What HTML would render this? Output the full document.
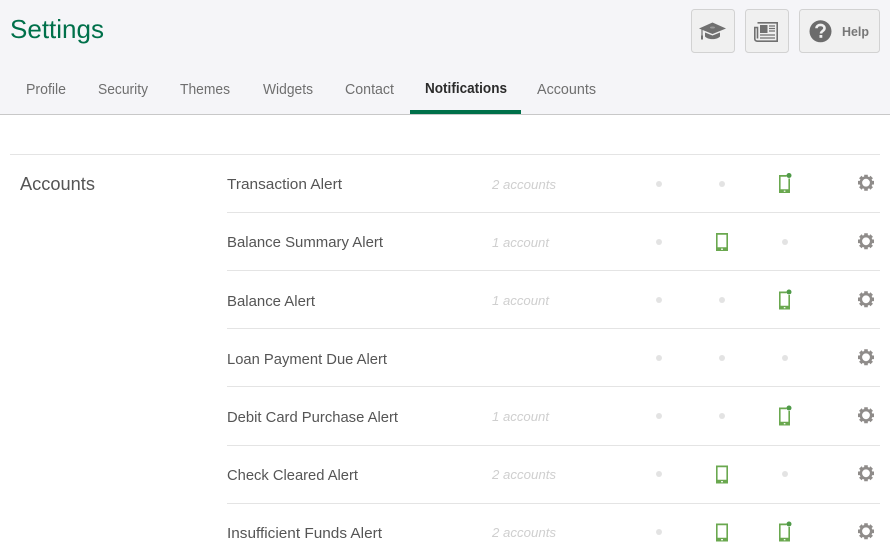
<!DOCTYPE html>
<html><head><meta charset="utf-8"><style>
html,body{margin:0;padding:0;background:#fff;width:890px;height:559px;overflow:hidden}
svg{display:block}
text{font-family:"Liberation Sans",sans-serif}
.t{font-size:14.5px;fill:#6f6f6f}
.r{font-size:15px;fill:#555}
.a{font-size:13px;font-style:italic;fill:#cfcfcf}
.d{fill:#e3e3e3}
</style></head><body>
<svg width="890" height="559" viewBox="0 0 890 559" xmlns="http://www.w3.org/2000/svg">
<defs>
<g id="gear"><circle cx="0" cy="0" r="5.200" fill="none" stroke="#8f8c8a" stroke-width="2.600"/>
<path d="M-1.800-8H1.800V-5H-1.800ZM-1.800 8H1.800V5H-1.800ZM-8-1.800V1.800H-5V-1.800ZM8-1.800V1.800H5V-1.800ZM-7-4.400L-4.400-7-2.800-5-5-2.800ZM7-4.400L4.400-7 2.800-5 5-2.800ZM-7 4.400L-4.400 7-2.800 5-5 2.800ZM7 4.400L4.400 7 2.800 5 5 2.800Z" fill="#8f8c8a"/></g>
<g id="ph"><path fill-rule="evenodd" d="M0 0H12V18H0ZM1.600 1.800V14.300H10.400V1.800Z" fill="#6aa84f"/><rect x="5" y="15.600" width="2" height="1.200" fill="#fff"/></g>
<g id="pd"><path d="M0 0H7.500V1.800H1.600V14.300H9.400V3.500H11V18H0Z" fill="#6aa84f"/><rect x="4.800" y="15.600" width="1.600" height="1.200" fill="#fff"/><circle cx="10" cy="0.500" r="2.500" fill="#4f9a48"/></g>
<circle id="dot" r="3" class="d"/>
</defs>

<rect width="890" height="114" fill="#f5f5f8"/>
<rect y="114" width="890" height="1" fill="#c8c8c8"/>
<rect x="410" y="110" width="111" height="4" fill="#00704a"/>

<text x="10" y="38" font-size="26" fill="#00704a" textLength="94" lengthAdjust="spacingAndGlyphs">Settings</text>

<text class="t" x="26" y="94" textLength="40" lengthAdjust="spacingAndGlyphs">Profile</text>
<text class="t" x="98" y="94" textLength="50" lengthAdjust="spacingAndGlyphs">Security</text>
<text class="t" x="180" y="94" textLength="50" lengthAdjust="spacingAndGlyphs">Themes</text>
<text class="t" x="263" y="94" textLength="50" lengthAdjust="spacingAndGlyphs">Widgets</text>
<text class="t" x="345" y="94" textLength="49" lengthAdjust="spacingAndGlyphs">Contact</text>
<text x="425" y="93" font-size="14.500" font-weight="bold" fill="#2b2b2b" textLength="82" lengthAdjust="spacingAndGlyphs">Notifications</text>
<text class="t" x="537" y="94" textLength="59" lengthAdjust="spacingAndGlyphs">Accounts</text>

<!-- buttons -->
<rect x="691.500" y="9.500" width="43" height="43" rx="3" fill="#f0f0f0" stroke="#d2d2d2"/>
<rect x="745.500" y="9.500" width="43" height="43" rx="3" fill="#f0f0f0" stroke="#d2d2d2"/>
<rect x="799.500" y="9.500" width="80" height="43" rx="3" fill="#f0f0f0" stroke="#d2d2d2"/>
<!-- cap -->
<path d="M712.500 22.500L726 28.500 712.500 34 699 28.500Z" fill="#707070"/>
<path d="M705 32.500V36.500C708 40 717 40 720 36.500V32.500L712.500 35.500Z" fill="#707070"/>
<path d="M702 29.500V36" stroke="#707070" stroke-width="1.200" fill="none"/>
<rect x="701" y="35.500" width="2" height="4" fill="#707070"/>
<ellipse cx="712.500" cy="27.500" rx="2.500" ry="1" fill="#9a9a9a"/>
<!-- news -->
<path d="M757.500 22.800H777.200V41.200H757.500C755.800 41.200 754.800 40.300 754.800 38.800V27.500H757.500V38.500" fill="#f0f0f0" stroke="#707070" stroke-width="1.600"/>
<rect x="760" y="25" width="7.500" height="8" fill="#707070"/>
<path d="M769 26H775M769 28.500H775M769 31H775M760 35H775M760 38H775" stroke="#707070" stroke-width="1.300"/>
<!-- help -->
<circle cx="820.500" cy="31.300" r="11" fill="#6c6c6c"/>
<path d="M816.500 28.300C816.500 23.800 824.500 23.800 824.500 28.300C824.500 31 821 31 821 33.500" fill="none" stroke="#f0f0f0" stroke-width="2.600"/>
<rect x="819.500" y="35" width="2.800" height="2.800" fill="#f0f0f0"/>
<text x="842" y="36" font-size="13" font-weight="bold" fill="#777" textLength="27" lengthAdjust="spacingAndGlyphs">Help</text>

<!-- dividers -->
<rect x="10" y="154" width="870" height="1" fill="#e4e4e4"/>
<rect x="227" y="212" width="653" height="1" fill="#e4e4e4"/>
<rect x="227" y="270" width="653" height="1" fill="#e4e4e4"/>
<rect x="227" y="328" width="653" height="1" fill="#e4e4e4"/>
<rect x="227" y="386" width="653" height="1" fill="#e4e4e4"/>
<rect x="227" y="445" width="653" height="1" fill="#e4e4e4"/>
<rect x="227" y="503" width="653" height="1" fill="#e4e4e4"/>

<text x="20" y="190" font-size="18" fill="#555" textLength="75" lengthAdjust="spacingAndGlyphs">Accounts</text>

<text class="r" x="227" y="189" textLength="115" lengthAdjust="spacingAndGlyphs">Transaction Alert</text>
<text class="r" x="227" y="247" textLength="156" lengthAdjust="spacingAndGlyphs">Balance Summary Alert</text>
<text class="r" x="227" y="306" textLength="88" lengthAdjust="spacingAndGlyphs">Balance Alert</text>
<text class="r" x="227" y="364" textLength="160" lengthAdjust="spacingAndGlyphs">Loan Payment Due Alert</text>
<text class="r" x="227" y="422" textLength="171" lengthAdjust="spacingAndGlyphs">Debit Card Purchase Alert</text>
<text class="r" x="227" y="480" textLength="131" lengthAdjust="spacingAndGlyphs">Check Cleared Alert</text>
<text class="r" x="227" y="538" textLength="155" lengthAdjust="spacingAndGlyphs">Insufficient Funds Alert</text>

<text class="a" x="492" y="189" textLength="64" lengthAdjust="spacingAndGlyphs">2 accounts</text>
<text class="a" x="492" y="247" textLength="57" lengthAdjust="spacingAndGlyphs">1 account</text>
<text class="a" x="492" y="305" textLength="57" lengthAdjust="spacingAndGlyphs">1 account</text>
<text class="a" x="492" y="421" textLength="57" lengthAdjust="spacingAndGlyphs">1 account</text>
<text class="a" x="492" y="479" textLength="64" lengthAdjust="spacingAndGlyphs">2 accounts</text>
<text class="a" x="492" y="537" textLength="64" lengthAdjust="spacingAndGlyphs">2 accounts</text>

<!-- row 1 -->
<use href="#dot" x="659" y="184"/><use href="#dot" x="722" y="184"/><use href="#pd" x="779" y="175"/><use href="#gear" x="866" y="182.700"/>
<!-- row 2 -->
<use href="#dot" x="659" y="242"/><use href="#ph" x="716" y="233"/><use href="#dot" x="785" y="242"/><use href="#gear" x="866" y="241.300"/>
<!-- row 3 -->
<use href="#dot" x="659" y="300"/><use href="#dot" x="722" y="300"/><use href="#pd" x="779" y="291.500"/><use href="#gear" x="866" y="299.300"/>
<!-- row 4 -->
<use href="#dot" x="659" y="358"/><use href="#dot" x="722" y="358"/><use href="#dot" x="785" y="358"/><use href="#gear" x="866" y="357.300"/>
<!-- row 5 -->
<use href="#dot" x="659" y="416"/><use href="#dot" x="722" y="416"/><use href="#pd" x="779" y="407.500"/><use href="#gear" x="866" y="415.300"/>
<!-- row 6 -->
<use href="#dot" x="659" y="474"/><use href="#ph" x="716" y="465.500"/><use href="#dot" x="785" y="474"/><use href="#gear" x="866" y="473.300"/>
<!-- row 7 -->
<use href="#dot" x="659" y="532"/><use href="#ph" x="716" y="523.500"/><use href="#pd" x="779" y="523.500"/><use href="#gear" x="866" y="531.300"/>
</svg>
</body></html>
